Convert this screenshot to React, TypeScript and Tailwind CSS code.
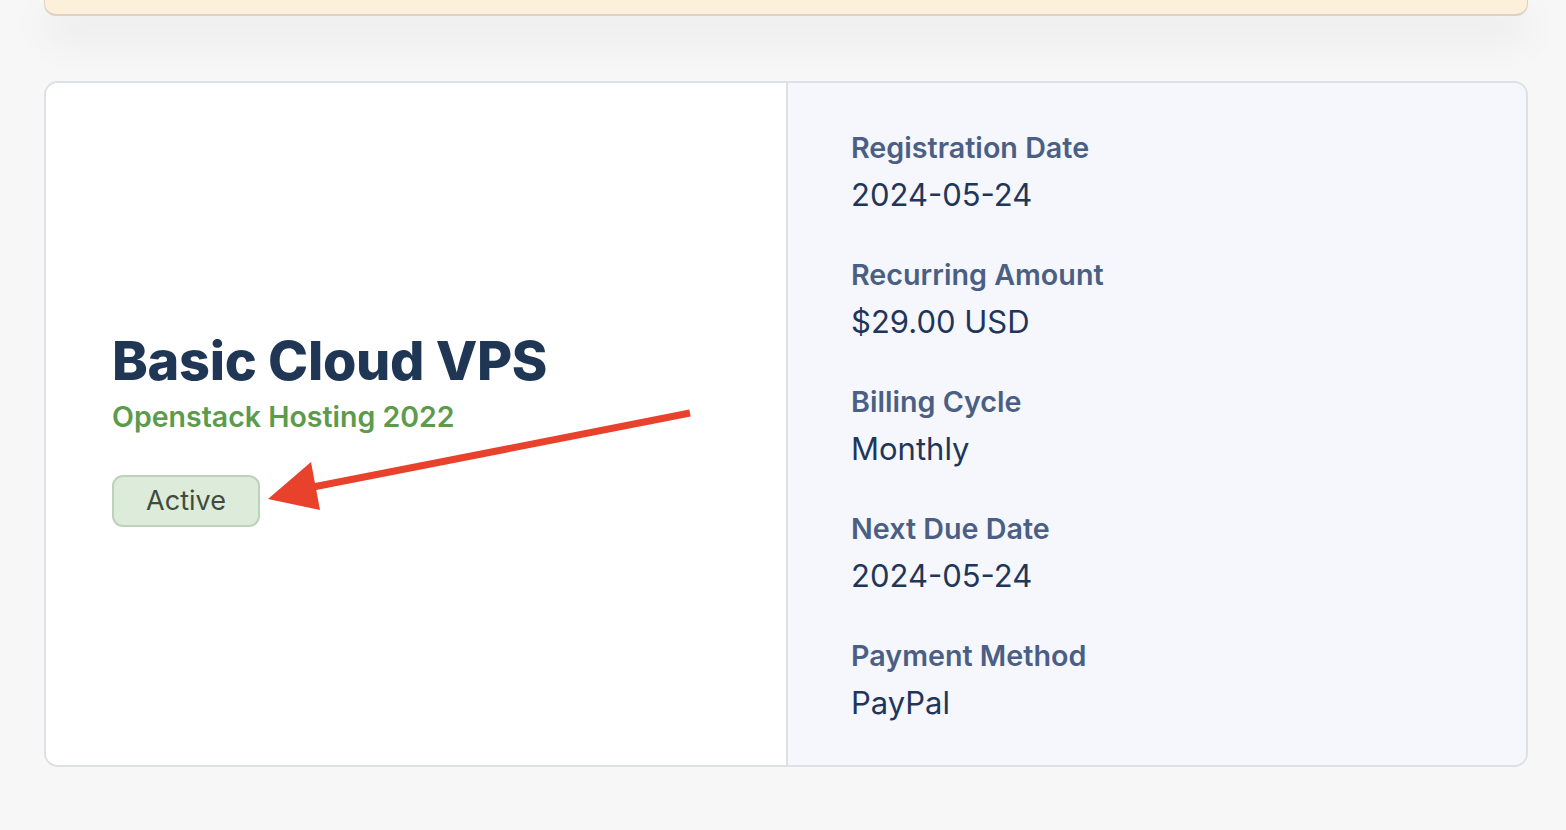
import React from "react";

const details = [
  { label: "Registration Date", value: "2024-05-24" },
  { label: "Recurring Amount", value: "$29.00 USD" },
  { label: "Billing Cycle", value: "Monthly" },
  { label: "Next Due Date", value: "2024-05-24" },
  { label: "Payment Method", value: "PayPal" },
];

function Arrow() {
  return (
    <svg className="absolute left-0 top-0 pointer-events-none" width="741" height="685" viewBox="0 0 741 685">
      <line x1="644" y1="330" x2="262" y2="405" stroke="#e8412c" strokeWidth="7" />
      <polygon points="222,416 265,379 274,427" fill="#e8412c" />
    </svg>
  );
}

export default function App() {
  return (
    <div className="min-h-[830px] w-full bg-[#f7f7f7] overflow-hidden" style={{ fontFamily: "Inter, 'Noto Sans', sans-serif" }}>
      {/* previous notice card, only its bottom edge is visible */}
      <div className="ml-[44px] w-[1484px] h-[16px] bg-[#fcf0db] border-x border-b-2 border-[#ddd2c2] rounded-b-[12px] shadow-[0_18px_40px_rgba(0,0,0,0.1)]" />

      <div className="ml-[44px] mt-[65px] w-[1484px] h-[686px] flex rounded-[14px] border-2 border-[#dde0e6] overflow-hidden bg-white">
        <div className="relative w-[740px] flex items-center pl-[66px] pt-[6px] bg-white">
          <div className="flex flex-col items-start">
            <h1 className="pt-[4px] text-[54px] leading-[60px] font-extrabold text-[#1f3654] tracking-[-0.3px]">Basic Cloud VPS</h1>
            <p className="mt-[9px] text-[28.5px] leading-[34px] font-semibold text-[#5c9a4c]">Openstack Hosting 2022</p>
            <span className="mt-[41px] inline-flex items-center justify-center w-[148px] h-[52px] rounded-[11px] border-2 border-[#bcd2b9] bg-[#ddecda] text-[27px] text-[#3f4b3d]">
              Active
            </span>
          </div>
          <Arrow />
        </div>
        <div className="flex-1 border-l-2 border-[#dde0e6] bg-[#f5f7fc] pl-[63px] pt-[46px] flex flex-col gap-[39px]">
          {details.map((d) => (
            <div key={d.label} className="flex flex-col">
              <span className="text-[28.7px] leading-[38px] font-semibold text-[#4b5f85]">{d.label}</span>
              <span className="mt-[6px] text-[31px] leading-[44px] text-[#1f365a]">{d.value}</span>
            </div>
          ))}
        </div>
      </div>
    </div>
  );
}
